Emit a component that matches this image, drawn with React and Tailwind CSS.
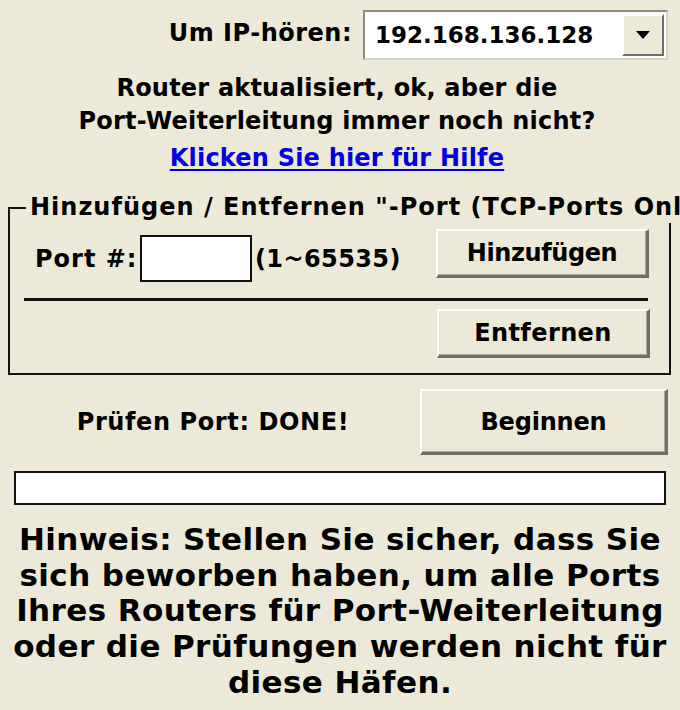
import React from 'react'

const FONT = { fontFamily: '"DejaVu Sans", Verdana, sans-serif' }

function XpButton({ children, className = '' }) {
  return (
    <button
      className={`bg-[#ece9d8] border-t-2 border-l-2 border-t-white border-l-white border-r-[3px] border-b-[3px] border-r-[#716f64] border-b-[#716f64] shadow-[inset_-1px_-1px_0_#aca899] font-bold text-black ${className}`}
    >
      {children}
    </button>
  )
}

export default function App() {
  return (
    <div className="w-[680px] h-[710px] bg-[#ece9d8] overflow-hidden text-black font-bold" style={FONT}>
      {/* IP select */}
      <div className="flex items-center justify-end pr-[12px] pt-[10px]">
        <span className="text-[24px] tracking-[0.5px] mr-[11px] mt-[-4px]">Um IP-hören:</span>
        <div className="w-[305px] h-[50px] bg-white border-2 border-t-[#8f8c7e] border-l-[#8f8c7e] border-r-[#d8d4c4] border-b-[#d8d4c4] flex items-center p-[2px]">
          <span className="flex-1 pl-[8px] text-[23px] tracking-[0px]">192.168.136.128</span>
          <div className="w-[42px] h-full bg-[#ece9d8] border-t-2 border-l-2 border-white border-r-2 border-b-2 border-r-[#716f64] border-b-[#716f64] flex items-center justify-center">
            <svg width="14" height="8" viewBox="0 0 14 8"><path d="M0 0h14L7 8z" fill="#000" /></svg>
          </div>
        </div>
      </div>

      {/* info */}
      <div className="flex flex-col items-center pr-[6px] mt-[12px] text-[24px] leading-[33px] tracking-[0.2px]">
        <div>Router aktualisiert, ok, aber die</div>
        <div>Port-Weiterleitung immer noch nicht?</div>
        <a className="text-[#0000e0] underline underline-offset-[3px] mt-[4px]">Klicken Sie hier für Hilfe</a>
      </div>

      {/* group box */}
      <div className="relative ml-[8px] mr-[9px] mt-[32px] h-[168px] border-2 border-[#111]">
        <div className="absolute left-[16px] -top-[18px] bg-[#ece9d8] pl-[4px] whitespace-nowrap text-[24px] tracking-[1px] leading-[32px]">
          Hinzufügen / Entfernen "-Port (TCP-Ports Only)
        </div>
        <div className="flex items-start pl-[25px] pt-[20px]">
          <div className="flex items-center mt-[6px] h-[47px]">
            <span className="text-[24px] tracking-[1px] w-[105px]">Port #:</span>
            <div className="w-[112px] h-[47px] bg-white border-2 border-[#111]" />
            <span className="ml-[3px] text-[24px] tracking-[0.4px] w-[181px]">(1~65535)</span>
          </div>
          <XpButton className="w-[213px] h-[49px] text-[24px] tracking-[-0.4px]">Hinzufügen</XpButton>
        </div>
        <div className="ml-[14px] mr-[21px] mt-[16px] h-[3px] bg-[#111]" />
        <div className="flex justify-end pr-[19px] mt-[8px]">
          <XpButton className="w-[213px] h-[49px] text-[24px] tracking-[0.4px]">Entfernen</XpButton>
        </div>
      </div>

      {/* check row */}
      <div className="flex items-center mt-[14px] pr-[12px]">
        <span className="flex-1 text-center pl-[70px] pr-[64px] text-[24px] tracking-[0.6px] whitespace-nowrap">Prüfen Port: DONE!</span>
        <XpButton className="w-[248px] h-[66px] text-[24px] tracking-[-0.2px]">Beginnen</XpButton>
      </div>

      {/* progress */}
      <div className="mx-[14px] mt-[16px] h-[34px] bg-white border-2 border-[#111]" />

      {/* note */}
      <div className="mt-[17px] text-center text-[31px] leading-[35.7px] tracking-[0.4px]">
        <div>Hinweis: Stellen Sie sicher, dass Sie</div>
        <div>sich beworben haben, um alle Ports</div>
        <div>Ihres Routers für Port-Weiterleitung</div>
        <div>oder die Prüfungen werden nicht für</div>
        <div>diese Häfen.</div>
      </div>
    </div>
  )
}
